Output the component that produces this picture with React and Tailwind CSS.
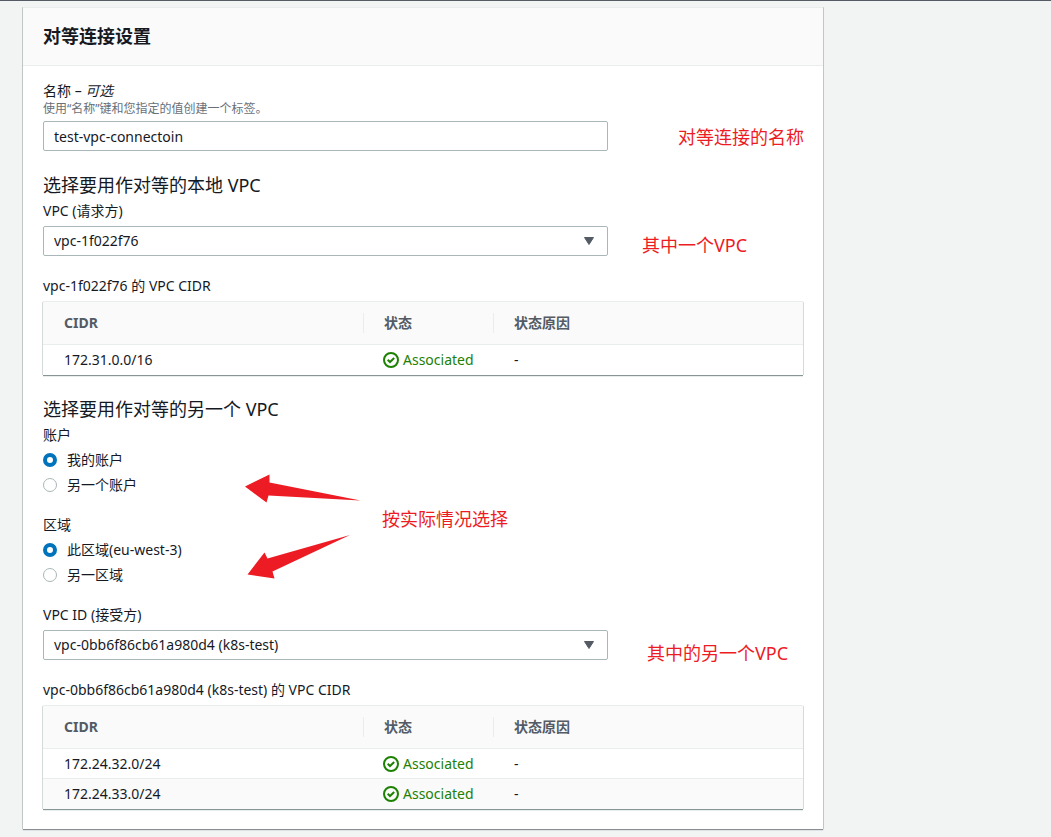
import React from 'react';

const requesterCidrs = [{ cidr: '172.31.0.0/16', status: 'Associated', reason: '-' }];

const accepterCidrs = [
  { cidr: '172.24.32.0/24', status: 'Associated', reason: '-' },
  { cidr: '172.24.33.0/24', status: 'Associated', reason: '-' },
];

function CheckIcon() {
  return (
    <svg width="16" height="16" viewBox="0 0 16 16" fill="none" stroke="#1d8102" strokeWidth="2" aria-hidden="true">
      <circle cx="8" cy="8" r="7" />
      <path d="M4.700 7.700l2.300 2.300 4.200-4" />
    </svg>
  );
}

function SelectField({ id, label, value }) {
  return (
    <div>
      <label htmlFor={id} className="block leading-5">{label}</label>
      <div className="relative mt-[5px] max-w-[565px]">
        <select
          id={id}
          defaultValue={value}
          className="block h-[30px] w-full appearance-none rounded-xs border border-[#aab7b8] bg-white pr-8 pl-[10px]"
        >
          <option value={value}>{value}</option>
        </select>
        <svg className="pointer-events-none absolute top-[11px] right-[13px]" width="11" height="8" viewBox="0 0 11 8" aria-hidden="true">
          <path d="M0.500 0.500h9L5 7.500z" fill="#545b64" stroke="#545b64" strokeLinejoin="round" />
        </svg>
      </div>
    </div>
  );
}

function RadioGroup({ name, legend, options }) {
  const [selected, setSelected] = React.useState(options[0]);

  return (
    <fieldset>
      <legend className="leading-5">{legend}</legend>
      {options.map(option => (
        <label key={option} className="mt-[5px] flex items-center gap-[10px] leading-5">
          <input
            type="radio"
            name={name}
            checked={selected === option}
            onChange={() => setSelected(option)}
            className="size-[14px] appearance-none rounded-full border border-[#aab7b8] bg-white checked:border-4 checked:border-[#0073bb]"
          />
          {option}
        </label>
      ))}
    </fieldset>
  );
}

function CidrTable({ caption, rows }) {
  return (
    <table className="w-full table-fixed border-separate border-spacing-0 text-left leading-5">
      <caption className="pb-[6px] text-left">{caption}</caption>
      <thead className="bg-[#fafafa] text-[#545b64] shadow-[0_-1px_0_0_#eaeded,1px_0_0_0_#d5dbdb,-1px_0_0_0_#d5dbdb]">
        <tr className="h-[43px]">
          <th className="w-[321px] border-b border-[#eaeded] p-0">
            <div className="border-r border-[#eaeded] pl-[21px]">CIDR</div>
          </th>
          <th className="w-[130px] border-b border-[#eaeded] p-0">
            <div className="border-r border-[#eaeded] pl-5">状态</div>
          </th>
          <th className="border-b border-[#eaeded] p-0 pl-5">状态原因</th>
        </tr>
      </thead>
      <tbody className="shadow-[0_1px_0_0_#879596,0_2px_0_0_#eaeded,1px_0_0_0_#d5dbdb,-1px_0_0_0_#d5dbdb]">
        {rows.map(row => (
          <tr key={row.cidr} className="group h-[30px] even:bg-[#fafafa]">
            <td className="border-b border-[#eaeded] p-0 pl-[21px] group-last:border-0">{row.cidr}</td>
            <td className="border-b border-[#eaeded] p-0 pl-[19px] group-last:border-0">
              <span className="flex items-center gap-1 text-[#1d8102]">
                <CheckIcon />
                {row.status}
              </span>
            </td>
            <td className="border-b border-[#eaeded] p-0 pl-5 group-last:border-0">{row.reason}</td>
          </tr>
        ))}
      </tbody>
    </table>
  );
}

function Note({ className, children }) {
  return <p className={`absolute text-lg leading-6 whitespace-nowrap text-[#ed1c24] ${className}`}>{children}</p>;
}

export default function App() {
  return (
    <div className="min-h-screen border-t border-[#545b64] bg-[#f2f3f3] px-[23px] pt-[6px] pb-2 font-['Noto_Sans','Noto_Sans_CJK_SC',sans-serif] text-sm text-[#16191f]">
      <main className="relative max-w-[800px] bg-white shadow-[0_1px_1px_0_#545b64aa,1px_0_0_0_#d0d5d5,-1px_0_0_0_#d0d5d5]">
        <header className="border-y border-[#eaeded] bg-[#fafafa] px-5 pt-4 pb-[17px]">
          <h1 className="text-lg leading-6 font-bold">对等连接设置</h1>
        </header>

        <form className="px-5 pt-[15px] pb-5">
          {/* Name */}
          <label htmlFor="name" className="block leading-5">
            名称 – <i>可选</i>
          </label>
          <p id="name-hint" className="text-xs leading-[15px] text-[#687078]">使用“名称”键和您指定的值创建一个标签。</p>
          <input
            id="name"
            type="text"
            aria-describedby="name-hint"
            defaultValue="test-vpc-connectoin"
            className="mt-[5px] block h-[30px] w-full max-w-[565px] rounded-xs border border-[#aab7b8] bg-white px-[10px]"
          />

          {/* Requester */}
          <h2 className="mt-[22px] mb-1 text-lg leading-6">选择要用作对等的本地 VPC</h2>
          <SelectField id="requester" label="VPC (请求方)" value="vpc-1f022f76" />
          <div className="mt-5">
            <CidrTable caption="vpc-1f022f76 的 VPC CIDR" rows={requesterCidrs} />
          </div>

          {/* Accepter */}
          <h2 className="mt-[22px] mb-1 text-lg leading-6">选择要用作对等的另一个 VPC</h2>
          <div className="flex flex-col gap-5">
            <RadioGroup name="account" legend="账户" options={['我的账户', '另一个账户']} />
            <RadioGroup name="region" legend="区域" options={['此区域(eu-west-3)', '另一区域']} />
            <SelectField id="accepter" label="VPC ID (接受方)" value="vpc-0bb6f86cb61a980d4 (k8s-test)" />
            <CidrTable caption="vpc-0bb6f86cb61a980d4 (k8s-test) 的 VPC CIDR" rows={accepterCidrs} />
          </div>
        </form>

        {/* Hand-drawn notes over the form */}
        <Note className="top-[118px] left-[655px]">对等连接的名称</Note>
        <Note className="top-[226px] left-[619px]">其中一个VPC</Note>
        <Note className="top-[500px] left-[359px]">按实际情况选择</Note>
        <Note className="top-[634px] left-[624px]">其中的另一个VPC</Note>
        <svg className="pointer-events-none absolute top-[463px] left-[217px]" width="130" height="120" viewBox="240 470 130 120" fill="#ed1c24" aria-hidden="true">
          <path d="M245 486.500L269.500 474.500V482.500L360.500 500.500L268.500 495.500L266.500 502.500Z" />
          <path d="M247.500 574.500L264.500 552.500L267.500 558.500L350 535L272.500 571.500L274.500 578.500Z" />
        </svg>
      </main>
    </div>
  );
}
